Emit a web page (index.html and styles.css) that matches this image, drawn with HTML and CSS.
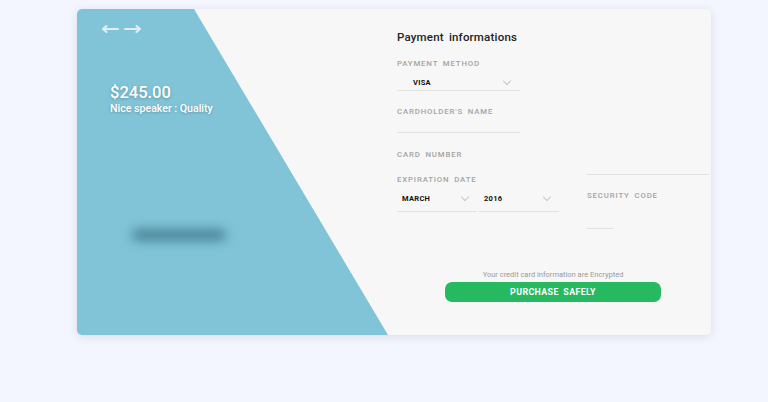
FILE: index.html
```html
<!DOCTYPE html>
<html>
<head>
<meta charset="utf-8">
<link rel="stylesheet" href="styles.css">
</head>
<body>
<div class="card">
  <div class="side">
    <div class="arrows">
      <svg width="17" height="8" viewBox="0 0 17 8"><path d="M1 4H16M1 4L4.5 1M1 4L4.5 7" fill="none" stroke="currentColor" stroke-width="2" stroke-linecap="round" stroke-linejoin="round"/></svg>
      <svg width="17" height="8" viewBox="0 0 17 8"><path d="M16 4H1M16 4L12.5 1M16 4L12.5 7" fill="none" stroke="currentColor" stroke-width="2" stroke-linecap="round" stroke-linejoin="round"/></svg>
    </div>
    <div class="price">$245.00</div>
    <div class="product">Nice speaker : Quality</div>
    <div class="blob"></div>
  </div>
  <div class="form">
    <h1 class="title">Payment informations</h1>
    <div class="label first">Payment method</div>
    <div class="select wide"><span>VISA</span><i class="chev"></i></div>
    <div class="label mt">Cardholder's name</div>
    <div class="input wide"></div>
    <div class="lower">
      <div class="col-left">
        <div class="label cn">Card number</div>
        <div class="label exp">Expiration date</div>
        <div class="selects">
          <div class="select small"><span>MARCH</span><i class="chev"></i></div>
          <div class="select small"><span>2016</span><i class="chev"></i></div>
        </div>
      </div>
      <div class="col-right">
        <div class="input cardnum"></div>
        <div class="label sec">Security code</div>
        <div class="input cvv"></div>
      </div>
    </div>
    <div class="buy">
      <div class="note">Your credit card information are Encrypted</div>
      <button class="btn">PURCHASE SAFELY</button>
    </div>
  </div>
</div>
</body>
</html>
```
FILE: styles.css
```css
html, body { margin: 0; padding: 0; }
body {
  background: #f3f6fe;
  font-family: Roboto, "Liberation Sans", sans-serif;
  width: 768px;
  height: 402px;
  overflow: hidden;
}
.card {
  position: relative;
  margin: 9px 0 0 77px;
  width: 634px;
  height: 326px;
  background: #f7f7f7;
  border-radius: 5px;
  box-shadow: 0 2px 10px rgba(40, 50, 90, 0.12);
  display: flex;
  overflow: hidden;
}
.card::before {
  content: "";
  position: absolute;
  left: 0; top: 0; right: 0; bottom: 0;
  background: #81c4d8;
  clip-path: polygon(0 0, 117px 0, 311px 326px, 0 326px);
}
.side {
  position: relative;
  width: 320px;
  flex: none;
  color: #fff;
}
.arrows {
  display: flex;
  gap: 5px;
  margin: 16px 0 0 25px;
  color: rgba(255, 255, 255, 0.75);
  height: 8px;
}
.arrows svg { display: block; }
.price {
  margin: 50px 0 0 33px;
  font-size: 16.5px;
  line-height: 20px;
  font-weight: 500;
  text-shadow: 0 1px 3px rgba(0, 0, 0, 0.25);
}
.product {
  margin: -1px 0 0 33px;
  font-size: 10.6px;
  line-height: 14px;
  font-weight: 500;
  text-shadow: 0 1px 3px rgba(0, 0, 0, 0.25);
}
.blob {
  margin: 114px 0 0 55px;
  width: 94px;
  height: 10px;
  border-radius: 6px;
  background: rgba(40, 95, 115, 0.75);
  filter: blur(6px);
}
.form {
  position: relative;
  flex: 1;
  padding-top: 20px;
  color: #222;
}
.title {
  margin: 0;
  font-size: 11.5px;
  line-height: 16px;
  font-weight: 500;
  letter-spacing: 0.2px;
  word-spacing: 2px;
  color: #222;
}
.label {
  font-size: 7.8px;
  line-height: 10px;
  letter-spacing: 0.85px;
  word-spacing: 2px;
  text-transform: uppercase;
  color: #a3a3a3;
  font-weight: 500;
}
.label.first { margin-top: 14px; }
.label.mt { margin-top: 16px; }
.select {
  display: flex;
  justify-content: space-between;
  border-bottom: 1px solid #e2e2e2;
  font-size: 7.5px;
  line-height: 10px;
  font-weight: 700;
  color: #111;
  letter-spacing: 0.3px;
  box-sizing: border-box;
}
.select.wide {
  width: 123px;
  height: 18px;
  margin-top: 4px;
  align-items: flex-end;
  padding: 0 10px 2px 16px;
}
.chev {
  display: block;
  width: 5px;
  height: 5px;
  border-right: 1px solid #c8c8c8;
  border-bottom: 1px solid #c8c8c8;
  transform: rotate(45deg);
  margin-bottom: 4px;
}
.input {
  border-bottom: 1px solid #e2e2e2;
}
.input.wide {
  width: 123px;
  height: 15px;
}
.lower {
  display: flex;
  gap: 28px;
}
.col-left { width: 162px; }
.label.cn { margin-top: 17px; }
.label.exp { margin-top: 15px; }
.selects {
  display: flex;
  gap: 2px;
}
.select.small {
  width: 80px;
  height: 23px;
  margin-top: 4px;
  align-items: center;
  padding: 0 9px 3px 5px;
}
.select.small .chev { margin-bottom: 3px; }
.col-right { width: 122px; }
.input.cardnum {
  width: 122px;
  height: 41px;
}
.label.sec { margin-top: 16px; }
.input.cvv {
  width: 26px;
  height: 27px;
}
.buy {
  margin-top: 41px;
  width: 312px;
  display: flex;
  flex-direction: column;
  align-items: center;
}
.note {
  font-size: 7.5px;
  line-height: 10px;
  color: #9a9a9a;
}
.btn {
  margin-top: 2px;
  width: 216px;
  height: 20px;
  border: none;
  border-radius: 7px;
  background: #27b960;
  color: #fff;
  font-family: Roboto, "Liberation Sans", sans-serif;
  font-weight: 700;
  font-size: 8.8px;
  letter-spacing: 0.4px;
  word-spacing: 2px;
  padding: 0;
}
```
